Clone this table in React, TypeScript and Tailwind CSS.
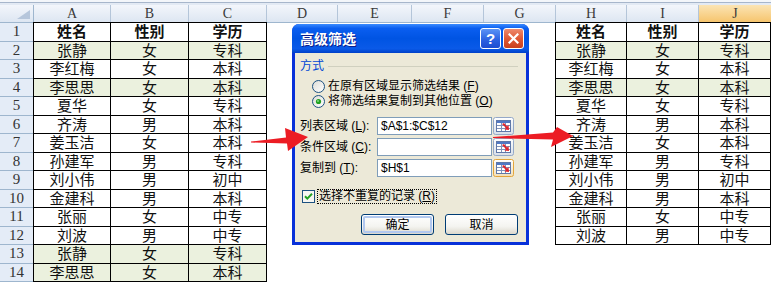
import React from "react";

type Row = { c: [string, string, string]; g?: boolean; b?: boolean };

const leftRows: Row[] = [
  { c: ["姓名", "性别", "学历"], b: true },
  { c: ["张静", "女", "专科"], g: true },
  { c: ["李红梅", "女", "本科"] },
  { c: ["李思思", "女", "本科"], g: true },
  { c: ["夏华", "女", "专科"] },
  { c: ["齐涛", "男", "本科"] },
  { c: ["姜玉洁", "女", "本科"] },
  { c: ["孙建军", "男", "专科"] },
  { c: ["刘小伟", "男", "初中"] },
  { c: ["金建科", "男", "本科"] },
  { c: ["张丽", "女", "中专"] },
  { c: ["刘波", "男", "中专"] },
  { c: ["张静", "女", "专科"], g: true },
  { c: ["李思思", "女", "本科"], g: true },
];

const rightRows: Row[] = leftRows.slice(0, 12);

const headerCols = [
  { l: "A", w: "w-[77px]" },
  { l: "B", w: "w-[78px]" },
  { l: "C", w: "w-[78px]" },
  { l: "D", w: "w-[71px]" },
  { l: "E", w: "w-[74px]" },
  { l: "F", w: "w-[72px]" },
  { l: "G", w: "w-[72px]" },
  { l: "H", w: "w-[71px]" },
  { l: "I", w: "w-[72px]" },
];

function Table({ rows, widths }: { rows: Row[]; widths: string[] }) {
  return (
    <div className="flex flex-col border-l border-t border-black">
      {rows.map((r, i) => (
        <div key={i} className={`flex h-[18.5px] ${r.g ? "bg-[#ebf1de]" : "bg-white"}`}>
          {r.c.map((t, j) => (
            <div
              key={j}
              className={`${widths[j]} flex items-center justify-center border-b border-r border-black text-[15px] leading-none text-[#111] ${r.b ? "font-bold" : ""}`}
            >
              {t}
            </div>
          ))}
        </div>
      ))}
    </div>
  );
}

function RefButton({ hot }: { hot?: boolean }) {
  return (
    <svg width="21" height="18" viewBox="0 0 21 18" className="shrink-0">
      <defs>
        <linearGradient id={hot ? "rbh" : "rb"} x1="0" y1="0" x2="0" y2="1">
          <stop offset="0" stopColor="#ffffff" />
          <stop offset="1" stopColor={hot ? "#f3dfb5" : "#d8dfe9"} />
        </linearGradient>
      </defs>
      <rect x="0.5" y="0.5" width="20" height="17" rx="2" fill={`url(#${hot ? "rbh" : "rb"})`} stroke={hot ? "#e3a53a" : "#94a8c8"} />
      <rect x="3.5" y="3.5" width="14" height="11" fill="#ffffff" stroke="#5f78a8" />
      <rect x="4" y="4" width="13" height="2" fill="#4f78c4" />
      <line x1="4" y1="8.5" x2="17" y2="8.5" stroke="#7f93bb" />
      <line x1="4" y1="11.5" x2="17" y2="11.5" stroke="#7f93bb" />
      <line x1="8.5" y1="6" x2="8.5" y2="14" stroke="#7f93bb" />
      <line x1="12.5" y1="6" x2="12.5" y2="14" stroke="#7f93bb" />
      <polygon points="9,7 11,6 14,9.5 15.5,8 16,13 11.5,12.5 13,11 " fill="#e0242a" />
    </svg>
  );
}

function Radio({ on }: { on?: boolean }) {
  return (
    <svg width="13" height="13" viewBox="0 0 13 13" className="shrink-0">
      <defs>
        <linearGradient id="rg" x1="0" y1="0" x2="1" y2="1">
          <stop offset="0" stopColor="#dcdcd6" />
          <stop offset="1" stopColor="#ffffff" />
        </linearGradient>
      </defs>
      <circle cx="6.5" cy="6.5" r="6" fill="url(#rg)" stroke="#1c5180" />
      {on && <circle cx="6.5" cy="6.5" r="2.6" fill="#21a121" />}
      {on && <circle cx="6" cy="6" r="1" fill="#7fdc7f" />}
    </svg>
  );
}

function XpButton({ label, def }: { label: string; def?: boolean }) {
  return (
    <div className="w-[73px] h-[21px] rounded-[3px] border border-[#003c74] bg-[linear-gradient(to_bottom,#ffffff_0%,#f4f4f0_60%,#dcd8cc_100%)] p-[1px]">
      <div
        className={`flex h-full w-full items-center justify-center rounded-[2px] text-[12px] leading-none text-black ${
          def ? "border-2 border-[#b2c8ef]" : ""
        }`}
      >
        {label}
      </div>
    </div>
  );
}

function FieldRow({ label, k, value, hot }: { label: string; k: string; value: string; hot?: boolean }) {
  return (
    <div className="flex h-[18px] items-center">
      <div className="w-[82px] pl-[5px] text-[12px] leading-none text-black">
        {label} (<u>{k}</u>):
      </div>
      <div className="flex h-[18px] w-[115px] items-center border border-[#7f9db9] bg-white pl-[3px] text-[12px] leading-none text-black">
        {value}
      </div>
      <div className="ml-[1px]">
        <RefButton hot={hot} />
      </div>
    </div>
  );
}

function Dialog() {
  return (
    <div className="absolute left-[292px] top-[24px] flex h-[221px] w-[237px] flex-col rounded-t-[7px] bg-[#0831d9] px-[3px] pb-[3px]">
      <div className="-mx-[3px] flex h-[29px] items-center rounded-t-[7px] bg-[linear-gradient(to_bottom,#3b8cff_0%,#0a5ef0_15%,#0054e3_50%,#0a5ae8_85%,#0040c8_100%)] pl-[8px] pr-[5px]">
        <span className="flex-1 text-[14px] font-bold leading-none text-white [text-shadow:1px_1px_0_#0a1e8c]">
          高级筛选
        </span>
        <div className="flex gap-[2px]">
          <div className="flex h-[21px] w-[21px] items-center justify-center rounded-[3px] border border-white bg-[linear-gradient(to_bottom,#5b93f6,#2a60e0_60%,#1c4dd0)] text-[15px] font-bold leading-none text-white">
            ?
          </div>
          <div className="flex h-[21px] w-[21px] items-center justify-center rounded-[3px] border border-white bg-[linear-gradient(to_bottom,#ee8a6e,#e05a36_50%,#c8401e)]">
            <svg width="11" height="11" viewBox="0 0 11 11">
              <path d="M1.5 1.5 L9.5 9.5 M9.5 1.5 L1.5 9.5" stroke="#ffffff" strokeWidth="2.2" strokeLinecap="square" />
            </svg>
          </div>
        </div>
      </div>
      <div className="flex flex-1 flex-col bg-[#ece9d8]">
        <div className="mt-[6px] flex h-[14px] items-center pl-[5px] pr-[8px]">
          <span className="text-[12px] leading-none text-[#0046d5]">方式</span>
          <div className="ml-[4px] h-px flex-1 bg-[#d0d0bf]" />
        </div>
        <div className="mt-[6px] flex h-[14px] items-center gap-[3px] pl-[17px] text-[12px] leading-none text-black">
          <Radio />
          <span>
            在原有区域显示筛选结果 (<u>F</u>)
          </span>
        </div>
        <div className="mt-[1px] flex h-[14px] items-center gap-[3px] pl-[17px] text-[12px] leading-none text-black">
          <Radio on />
          <span>
            将筛选结果复制到其他位置 (<u>O</u>)
          </span>
        </div>
        <div className="mt-[9px] flex flex-col gap-[3px]">
          <FieldRow label="列表区域" k="L" value="$A$1:$C$12" />
          <FieldRow label="条件区域" k="C" value="" />
          <FieldRow label="复制到" k="T" value="$H$1" hot />
        </div>
        <div className="mt-[11px] flex h-[16px] items-center pl-[7px]">
          <svg width="13" height="13" viewBox="0 0 13 13" className="shrink-0">
            <rect x="0.5" y="0.5" width="12" height="12" fill="#f6f6f2" stroke="#1c5180" />
            <path d="M3 6.2 L5.3 8.6 L10 3.8" fill="none" stroke="#21a121" strokeWidth="2" />
          </svg>
          <div className="ml-[2px] border border-dotted border-black px-[1px] text-[12px] leading-[13px] text-black">
            选择不重复的记录 (<u>R</u>)
          </div>
        </div>
        <div className="mt-[10px] flex justify-end gap-[11px] pr-[8px]">
          <XpButton label="确定" def />
          <XpButton label="取消" />
        </div>
      </div>
    </div>
  );
}

export default function App() {
  const w3 = ["w-[77px]", "w-[78px]", "w-[78px]"];
  const wr = ["w-[71px]", "w-[72px]", "w-[72px]"];
  return (
    <div className="relative h-[282px] w-[771px] overflow-hidden bg-white font-['Liberation_Sans','Noto_Sans_CJK_SC',sans-serif]">
      <div className="h-[2px] bg-[#f3f6fa]" />
      <div className="h-px bg-[#a7b6cb]" />
      <div className="h-[2px] bg-[#e3eaf4]" />
      <div className="flex h-[17px] bg-[linear-gradient(to_bottom,#f3f6fb,#dde6f2)] font-['Liberation_Serif',serif] text-[14px] text-[#3a3a3a]">
        <div className="relative w-[34px] border-r border-[#9eb6ce]">
          <svg width="13" height="9" viewBox="0 0 13 9" className="absolute bottom-[3px] right-[3px]">
            <polygon points="13,0 13,9 0,9" fill="#b6c6db" />
          </svg>
        </div>
        {headerCols.map((c) => (
          <div key={c.l} className={`${c.w} flex items-center justify-center border-r border-[#b4c5d9] leading-none`}>
            {c.l}
          </div>
        ))}
        <div className="flex w-[72px] items-center justify-center bg-[linear-gradient(to_bottom,#fbe4b4,#f6c56e)] leading-none">
          J
        </div>
      </div>
      <div className="flex">
        <div className="flex w-[33px] flex-col border-t border-[#9eb6ce] bg-[#e4ecf7]">
          {leftRows.map((_, i) => (
            <div
              key={i}
              className="flex h-[18.5px] items-center justify-center border-b border-[#9eb6ce] font-['Liberation_Serif',serif] text-[15px] leading-none text-[#333]"
            >
              {i + 1}
            </div>
          ))}
        </div>
        <Table rows={leftRows} widths={w3} />
        <div className="w-[288px] border-t border-[#9eb6ce]" />
        <div>
          <Table rows={rightRows} widths={wr} />
        </div>
      </div>
      <Dialog />
      <svg className="pointer-events-none absolute left-0 top-0" width="771" height="282" viewBox="0 0 771 282">
        <polygon points="251,141.5 286,137.5 285,128 308,137 288,151 287,143.5 251,142.5" fill="#ec1c24" />
        <polygon points="493,137 553,132.5 557,127 573,136 551,147 553,139.5 493,138" fill="#ec1c24" />
      </svg>
    </div>
  );
}
